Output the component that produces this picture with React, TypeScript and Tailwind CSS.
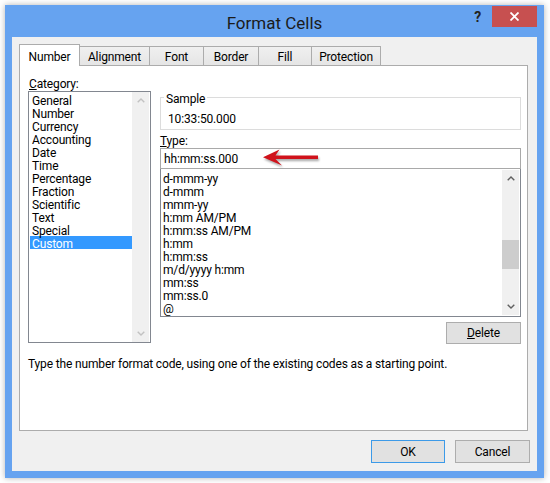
import type { ReactNode } from 'react'

const CATEGORIES = [
  'General',
  'Number',
  'Currency',
  'Accounting',
  'Date',
  'Time',
  'Percentage',
  'Fraction',
  'Scientific',
  'Text',
  'Special',
  'Custom',
]

const FORMATS = [
  'd-mmm-yy',
  'd-mmm',
  'mmm-yy',
  'h:mm AM/PM',
  'h:mm:ss AM/PM',
  'h:mm',
  'h:mm:ss',
  'm/d/yyyy h:mm',
  'mm:ss',
  'mm:ss.0',
  '@',
]

const TABS = [
  { label: 'Number', width: 'w-[61px]' },
  { label: 'Alignment', width: 'w-[71px]' },
  { label: 'Font', width: 'w-[55px]' },
  { label: 'Border', width: 'w-[56px]' },
  { label: 'Fill', width: 'w-[54px]' },
  { label: 'Protection', width: 'w-[70px]' },
]

function Chevron({ up, color }: { up?: boolean; color: string }) {
  return (
    <svg width="8" height="5" viewBox="0 0 8 5" className={up ? '' : 'rotate-180'}>
      <path d="M0.7 4.3 L4 1 L7.3 4.3" fill="none" stroke={color} strokeWidth="1.4" />
    </svg>
  )
}

function ScrollBar({ disabled, children }: { disabled?: boolean; children?: ReactNode }) {
  const color = disabled ? '#c2c2c2' : '#606060'
  return (
    <div className="flex w-[17px] shrink-0 flex-col bg-[#f0f0f0]">
      <div className="flex h-[17px] items-center justify-center">
        <Chevron up color={color} />
      </div>
      <div className="flex-1">{children}</div>
      <div className="flex h-[17px] items-center justify-center">
        <Chevron color={color} />
      </div>
    </div>
  )
}

function Button({ children, primary, className = '' }: { children: ReactNode; primary?: boolean; className?: string }) {
  return (
    <div
      className={`flex items-center justify-center border bg-[#e1e1e1] ${
        primary ? 'border-[#3c9ae8]' : 'border-[#adadad]'
      } ${className}`}
    >
      {children}
    </div>
  )
}

export default function App() {
  return (
    <div className="h-[483px] w-[550px] overflow-hidden bg-white pl-[5px] pt-[5px] font-['Roboto',sans-serif] text-[12px] leading-[15px] tracking-[-0.15px] text-black">
      <div className="flex h-[473px] w-[539px] flex-col bg-[#66a3f0] px-[7px] pb-[7px] shadow-[0_0_6px_rgba(0,0,0,0.3)]">
        {/* title bar */}
        <div className="-mx-[7px] grid h-[32px] grid-cols-[1fr_auto_1fr]">
          <div />
          <div className="pt-[8px] text-[17px] leading-[20px] tracking-normal text-[#1b1b1b]">Format Cells</div>
          <div className="flex items-start justify-end pr-[7px] pt-[1px]">
            <span className="mr-[11px] mt-[3px] text-[14px] font-bold leading-[16px] text-[#222]">?</span>
            <div className="flex h-[21px] w-[45px] items-center justify-center bg-[#c75050]">
              <svg width="9" height="9" viewBox="0 0 9 9">
                <path d="M0.5 0.5 L8.5 8.5 M8.5 0.5 L0.5 8.5" stroke="white" strokeWidth="1.8" />
              </svg>
            </div>
          </div>
        </div>

        {/* client area */}
        <div className="flex flex-1 flex-col bg-[#f0f0f0] pl-[7px] pt-[7px]">
          <div className="flex h-[21px] items-end">
            {TABS.map((tab, i) =>
              i === 0 ? (
                <div
                  key={tab.label}
                  className={`relative z-10 -mb-px -mr-px flex h-[22px] ${tab.width} items-start justify-center border border-b-0 border-[#acacac] bg-white pt-[5px]`}
                >
                  {tab.label}
                </div>
              ) : (
                <div
                  key={tab.label}
                  className={`-mr-px flex h-[19px] ${tab.width} items-center justify-center border border-b-0 border-[#acacac] bg-[linear-gradient(#f0f0f0,#e5e5e5)] pt-[3px]`}
                >
                  {tab.label}
                </div>
              ),
            )}
          </div>

          {/* tab panel */}
          <div className="flex h-[366px] w-[509px] flex-col border border-[#acacac] bg-white">
            <div className="flex">
              <div className="ml-[8px] flex flex-col">
                <div className="mt-[9px] h-[16px] pl-px leading-[18px]">
                  <span className="underline">C</span>ategory:
                </div>
                <div className="flex h-[252px] w-[123px] border border-[#828790]">
                  <div className="flex-1 pt-[1px]">
                    {CATEGORIES.map((c) =>
                      c === 'Custom' ? (
                        <div key={c} className="ml-px h-[13px] bg-[#3399ff] pl-[2px] leading-[16px] text-white">
                          {c}
                        </div>
                      ) : (
                        <div key={c} className="h-[13px] pl-[3px] leading-[16px]">
                          {c}
                        </div>
                      ),
                    )}
                  </div>
                  <div className="mr-px flex">
                    <ScrollBar disabled />
                  </div>
                </div>
              </div>

              <div className="ml-[9px] flex w-[361px] flex-col">
                <div className="relative mt-[31px] h-[33px] border border-[#dcdcdc] pl-[7px] pt-[14px]">
                  <span className="absolute -top-[6px] left-[3px] bg-white px-[2px]">Sample</span>
                  10:33:50.000
                </div>
                <div className="mt-[2px] h-[16px] leading-[19px]">
                  <span className="underline">T</span>ype:
                </div>
                <div className="relative flex h-[21px] items-center border border-[#a9a9a9] pl-[3px] pt-[2px]">
                  hh:mm:ss.000
                  <svg
                    width="58"
                    height="20"
                    viewBox="0 0 58 20"
                    className="absolute left-[102px] -top-px drop-shadow-[1px_2px_1px_rgba(0,0,0,0.35)]"
                  >
                    <path d="M0 9.3 L16.5 1.5 L12.5 7.6 L55 7.6 L55 11 L12.5 11 L19 17.5 Z" fill="#d0121b" />
                  </svg>
                </div>
                <div className="flex h-[148px] border border-t-0 border-[#828790]">
                  <div className="flex-1 pl-[2px] pt-[2px]">
                    {FORMATS.map((f) => (
                      <div key={f} className="h-[13px] leading-[16px]">
                        {f}
                      </div>
                    ))}
                  </div>
                  <div className="mb-px mr-px mt-px flex">
                    <ScrollBar>
                      <div className="mt-[53px] h-[29px] bg-[#cdcdcd]" />
                    </ScrollBar>
                  </div>
                </div>
                <Button className="mt-[5px] h-[22px] w-[75px] self-end pt-px">
                  <span>
                    <span className="underline">D</span>elete
                  </span>
                </Button>
              </div>
            </div>
            <div className="mt-[13px] pl-[8px]">
              Type the number format code, using one of the existing codes as a starting point.
            </div>
          </div>

          <div className="mt-[9px] flex justify-end gap-[10px] pr-[7px]">
            <Button primary className="h-[23px] w-[74px] pt-px">
              OK
            </Button>
            <Button className="h-[23px] w-[75px] pt-px">Cancel</Button>
          </div>
        </div>
      </div>
    </div>
  )
}
